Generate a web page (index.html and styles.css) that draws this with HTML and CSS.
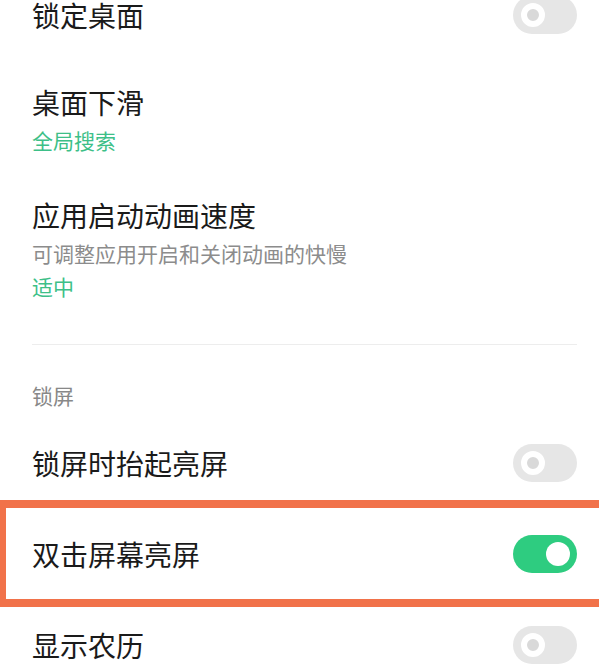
FILE: index.html
```html
<!DOCTYPE html>
<html lang="zh-CN">
  <head>
    <meta charset="UTF-8" />
    <meta name="viewport" content="width=599" />
    <title>桌面设置</title>
    <link rel="stylesheet" href="styles.css">
  </head>
  <body>
    <div class="settings">
      <div class="row">
        <div class="row-title">锁定桌面</div>
        <div class="switch"><span class="knob"></span></div>
      </div>

      <div class="item item-first">
        <div class="row-title">桌面下滑</div>
        <div class="sub sub-green">全局搜索</div>
      </div>

      <div class="item">
        <div class="row-title">应用启动动画速度</div>
        <div class="sub">可调整应用开启和关闭动画的快慢</div>
        <div class="sub sub-green sub-next">适中</div>
      </div>

      <div class="divider"></div>

      <div class="section-title">锁屏</div>

      <div class="row">
        <div class="row-title">锁屏时抬起亮屏</div>
        <div class="switch"><span class="knob"></span></div>
      </div>

      <div class="row row-marked">
        <div class="row-title">双击屏幕亮屏</div>
        <div class="switch on"><span class="knob"></span></div>
      </div>

      <div class="row">
        <div class="row-title">显示农历</div>
        <div class="switch"><span class="knob"></span></div>
      </div>
    </div>
  </body>
</html>
```

FILE: styles.css
```css
body {
  margin: 0;
  background: #fff;
  font-family: "Noto Sans CJK SC", "Noto Sans", sans-serif;
  overflow: hidden;
}

.settings {
  margin-top: -31px; /* 첫 줄이 위로 잘려 보임 */
}

.row {
  height: 91px;
  display: flex;
  justify-content: space-between;
  align-items: center;
  padding: 0 22px 0 32px;
  position: relative;
}

/* 주황 강조 테두리 */
.row-marked::after {
  content: "";
  position: absolute;
  top: -8px;
  bottom: -8px;
  left: 0;
  right: 0;
  border: 8px solid #f1724a;
  border-left-width: 6px;
  border-right: none;
  pointer-events: none;
}

.row-title {
  font-size: 28px;
  line-height: 36px;
  color: #1a1a1a;
}

.item {
  padding: 22px 22px 18px 32px;
}

.item-first {
  padding-top: 24px;
}

.sub {
  font-size: 21px;
  line-height: 33px;
  color: #8c8c8c;
  margin-top: 4px;
}

.sub-next {
  margin-top: 0;
}

.sub-green {
  color: #3dbf88;
}

.divider {
  height: 1px;
  background: #ededed;
  margin: 23px 22px 0 32px;
}

.section-title {
  font-size: 21px;
  line-height: 30px;
  color: #888;
  padding: 35px 32px 7px;
}

.switch {
  width: 64px;
  height: 38px;
  border-radius: 19px;
  background: #e6e6e6;
  position: relative;
  flex-shrink: 0;
}

.knob {
  position: absolute;
  top: 7px;
  left: 8px;
  width: 12px;
  height: 12px;
  border-radius: 50%;
  background: #d9d9d9;
  border: 6px solid #fff;
}

.switch.on {
  background: #2ecc80;
}

.switch.on .knob {
  left: auto;
  right: 7px;
  top: 7px;
  width: 24px;
  height: 24px;
  border: none;
  background: #fff;
}
```
